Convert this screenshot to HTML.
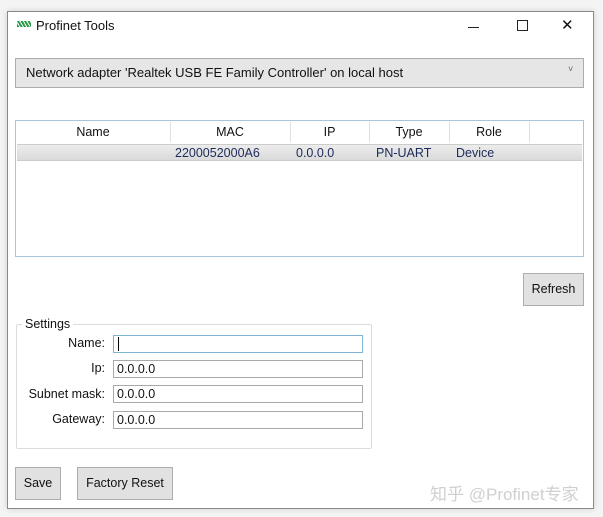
<!DOCTYPE html>
<html><head><style>
body{margin:0;width:603px;height:517px;background:#f4f4f4;position:relative;overflow:hidden;font-family:"Liberation Sans","Noto Sans CJK SC",sans-serif;font-size:12.5px;color:#111}
.a{position:absolute}
.win{left:7px;top:11px;width:585px;height:496px;background:#fff;border:1px solid #8a8a8a;box-shadow:0 0 6px rgba(0,0,0,.15)}
.btn{background:#e1e1e1;border:1px solid #adadad;text-align:center;box-sizing:border-box}
.inp{left:113px;width:250px;height:18px;border:1px solid #a9a9a9;box-sizing:border-box;padding-left:3px;line-height:16px;background:#fff}
.lbl{width:92px;left:13px;text-align:right}
.hd{top:125px;text-align:center}
</style></head><body>
<div class="a win"></div>
<div class="a" style="left:17px;top:21px;width:14px;height:6px;background:repeating-linear-gradient(60deg,#2a9a4a 0 2px,transparent 2px 3px)"></div>
<div class="a" style="left:36px;top:18px;font-size:13px">Profinet Tools</div>
<div class="a" style="left:468px;top:27px;width:11px;border-top:1px solid #222"></div>
<div class="a" style="left:517px;top:20px;width:9px;height:9px;border:1px solid #222"></div>
<div class="a" style="left:561px;top:16px;font-size:15px">✕</div>
<div class="a" style="left:15px;top:58px;width:569px;height:30px;background:#e6e6e6;border:1px solid #acacac;box-sizing:border-box"></div>
<div class="a" style="left:26px;top:65px;font-size:13px">Network adapter 'Realtek USB FE Family Controller' on local host</div>
<div class="a" style="left:568px;top:64px;font-size:9px;color:#666">˅</div>
<div class="a" style="left:15px;top:120px;width:569px;height:137px;border:1px solid #a9c6d9;box-sizing:border-box;background:#fff"></div>
<div class="a" style="left:170px;top:122px;height:20px;border-left:1px solid #e0e0e0"></div>
<div class="a" style="left:290px;top:122px;height:20px;border-left:1px solid #e0e0e0"></div>
<div class="a" style="left:369px;top:122px;height:20px;border-left:1px solid #e0e0e0"></div>
<div class="a" style="left:449px;top:122px;height:20px;border-left:1px solid #e0e0e0"></div>
<div class="a" style="left:529px;top:122px;height:20px;border-left:1px solid #e0e0e0"></div>
<div class="a hd" style="left:16px;width:154px">Name</div>
<div class="a hd" style="left:170px;width:120px">MAC</div>
<div class="a hd" style="left:290px;width:79px">IP</div>
<div class="a hd" style="left:369px;width:80px">Type</div>
<div class="a hd" style="left:449px;width:80px">Role</div>
<div class="a" style="left:17px;top:144px;width:565px;height:17px;background:linear-gradient(#ececec,#dadada);border-top:1px solid #ccc;border-bottom:1px solid #ccc;box-sizing:border-box"></div>
<div class="a" style="left:175px;top:146px;color:#1d2a5a">2200052000A6</div>
<div class="a" style="left:296px;top:146px;color:#1d2a5a">0.0.0.0</div>
<div class="a" style="left:376px;top:146px;color:#1d2a5a">PN-UART</div>
<div class="a" style="left:456px;top:146px;color:#1d2a5a">Device</div>
<div class="a btn" style="left:523px;top:273px;width:61px;height:33px;line-height:31px">Refresh</div>
<div class="a" style="left:16px;top:324px;width:356px;height:125px;border:1px solid #dcdcdc;border-radius:2px;box-sizing:border-box"></div>
<div class="a" style="left:22px;top:317px;background:#fff;padding:0 3px">Settings</div>
<div class="a lbl" style="top:336px">Name:</div>
<div class="a lbl" style="top:361px">Ip:</div>
<div class="a lbl" style="top:387px">Subnet mask:</div>
<div class="a lbl" style="top:412px">Gateway:</div>
<div class="a inp" style="top:335px;border-color:#7eb4d4"><span style="border-left:1px solid #000;margin-left:1px">&nbsp;</span></div>
<div class="a inp" style="top:360px">0.0.0.0</div>
<div class="a inp" style="top:385px">0.0.0.0</div>
<div class="a inp" style="top:411px">0.0.0.0</div>
<div class="a btn" style="left:15px;top:467px;width:46px;height:33px;line-height:31px">Save</div>
<div class="a btn" style="left:77px;top:467px;width:96px;height:33px;line-height:31px">Factory Reset</div>
<div class="a" style="left:430px;top:480px;font-size:17px;color:#d0d0d0">知乎 @Profinet专家</div>
</body></html>
